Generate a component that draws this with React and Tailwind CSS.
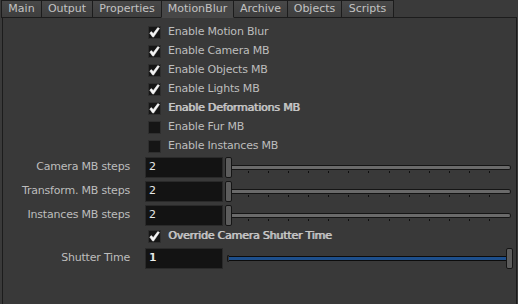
import React from "react";

const tabs = [
  { name: "Main", w: 41 },
  { name: "Output", w: 52 },
  { name: "Properties", w: 70 },
  { name: "MotionBlur", w: 73, active: true },
  { name: "Archive", w: 55 },
  { name: "Objects", w: 55 },
  { name: "Scripts", w: 53 },
];

function Check({ checked }) {
  return (
    <div className="w-[13px] h-[13px] bg-[#151515] border border-[#2e2e2e] flex items-center justify-center">
      {checked && (
        <svg width="11" height="11" viewBox="0 0 12 12">
          <path d="M0.8 6.6 L2.6 5 L4.6 7.2 L9.6 0.6 L11.4 1.6 L5 11 L4 11 Z" fill="#f4f4f4" stroke="#f4f4f4" strokeWidth="0.6" strokeLinejoin="round" />
        </svg>
      )}
    </div>
  );
}

function CheckRow({ label, checked, bold }) {
  return (
    <div className="h-[19px] flex items-center pl-[145px]">
      <Check checked={checked} />
      <span
        className={`ml-[7px] text-[11px] tracking-[-0.2px] ${
          bold ? "text-[#c6c6c6] [text-shadow:0.8px_0_0_#c6c6c6]" : "text-[#bdbdbd]"
        }`}
      >
        {label}
      </span>
    </div>
  );
}

function Ticks() {
  return (
    <div className="absolute left-[23px] top-[14px] w-[242px] flex justify-between">
      {Array.from({ length: 13 }).map((_, i) => (
        <div key={i} className="w-[1px] h-[2px] bg-[#0e0e0e]" />
      ))}
    </div>
  );
}

function StepRow({ label, value }) {
  return (
    <div className="h-[21px] flex items-center">
      <div className="w-[130px] text-right text-[11px] tracking-[-0.2px] text-[#bdbdbd] pr-[1px]">{label}</div>
      <div className="ml-[14px] w-[78px] h-[21px] bg-[#131313] border border-[#2a2a2a] flex items-center pl-[3px] text-[11px] text-[#e8e8e8]">{value}</div>
      <div className="relative ml-[2px] w-[288px] h-[21px] flex items-center">
        <div className="w-[7px] h-[21px] bg-[#5c5c5c] border border-[#151515] rounded-[2px]" />
        <div className="flex-1 h-[5px] bg-[#6a6a6a] border-y border-[#151515] border-r rounded-r-[3px] mr-[2px]" />
        <Ticks />
      </div>
    </div>
  );
}

export default function App() {
  return (
    <div className="w-[518px] h-[304px] bg-[#3a3a3a] overflow-hidden flex flex-col" style={{ fontFamily: '"DejaVu Sans", "Liberation Sans", sans-serif' }}>
      <div className="h-[18px] flex items-end pl-[1px] shrink-0">
        {tabs.map((t) => (
          <div
            key={t.name}
            style={{ width: t.w }}
            className={`h-[18px] flex items-center justify-center text-[11px] text-[#c2c2c2] border border-[#1c1c1c] -ml-[1px] first:ml-0 ${
              t.active ? "bg-[#474747] border-b-transparent relative z-10" : "bg-gradient-to-b from-[#484848] to-[#3e3e3e]"
            }`}
          >
            {t.name}
          </div>
        ))}
      </div>
      <div className="flex-1 ml-[2px] mr-[1px] -mt-[1px] border border-[#1c1c1c] bg-[#393939] border-b-0 pt-[5px]">
        <CheckRow label="Enable Motion Blur" checked />
        <CheckRow label="Enable Camera MB" checked />
        <CheckRow label="Enable Objects MB" checked />
        <CheckRow label="Enable Lights MB" checked />
        <CheckRow label="Enable Deformations MB" checked bold />
        <CheckRow label="Enable Fur MB" />
        <CheckRow label="Enable Instances MB" />
        <div className="mt-[1px] flex flex-col gap-[3px] -ml-[2px]">
          <StepRow label="Camera MB steps" value="2" />
          <StepRow label="Transform. MB steps" value="2" />
          <StepRow label="Instances MB steps" value="2" />
        </div>
        <div className="mt-[1px]">
          <CheckRow label="Override Camera Shutter Time" checked bold />
        </div>
        <div className="mt-[2px] h-[21px] flex items-center -ml-[2px]">
          <div className="w-[130px] text-right text-[11px] tracking-[-0.2px] text-[#bdbdbd] pr-[1px]">Shutter Time</div>
          <div className="ml-[14px] w-[78px] h-[21px] bg-[#131313] border border-[#2a2a2a] flex items-center pl-[3px] text-[11px] text-[#eeeeee] [text-shadow:0.8px_0_0_#eeeeee]">1</div>
          <div className="ml-[4px] w-[286px] h-[21px] flex items-center">
            <div className="w-[2px] h-[7px] border border-[#151515] border-r-0 rounded-l-[3px]" />
            <div className="flex-1 h-[5px] bg-[#1d4f8c] border-y border-[#0c0c0c]" />
            <div className="w-[7px] h-[21px] bg-[#5c5c5c] border border-[#151515] rounded-[2px]" />
          </div>
        </div>
      </div>
    </div>
  );
}
